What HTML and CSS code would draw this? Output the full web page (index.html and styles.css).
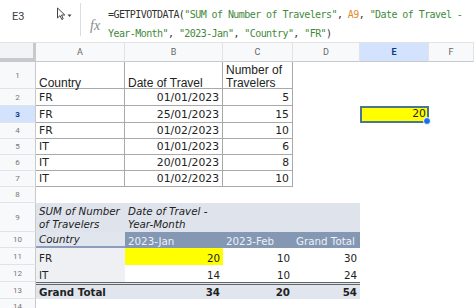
FILE: index.html
```html
<!DOCTYPE html>
<html>
	<head>
		<meta charset="UTF-8">
		<title>GETPIVOTDATA</title>
		<link rel="stylesheet" href="styles.css">
	</head>
	<body>
		<div class="bar">
			<div class="namebox">E3</div>
			<div class="pointer">
				<svg width="18" height="14" viewBox="0 0 18 14">
					<path d="M1.5 1 L1.5 11 L4 8.6 L5.8 12.5 L7.2 11.8 L5.5 8 L8.8 8 Z" fill="#fff" stroke="#444" stroke-width="1" stroke-linejoin="round"/>
					<path d="M11.5 7.5 L15.5 7.5 L13.5 10 Z" fill="#444"/>
				</svg>
			</div>
			<div class="sep"></div>
			<div class="fx">fx</div>
			<div class="formula">
				<div>=GETPIVOTDATA(<span class="str">"SUM of Number of Travelers"</span>, <span class="ref">A9</span>, <span class="str">"Date of Travel -</span></div>
				<div><span class="str">Year-Month"</span>, <span class="str">"2023-Jan"</span>, <span class="str">"Country"</span>, <span class="str">"FR"</span>)</div>
			</div>
		</div>

		<div class="sheet">
			<!-- column headers -->
			<div class="corner"></div>
			<div class="colhead">A</div>
			<div class="colhead">B</div>
			<div class="colhead">C</div>
			<div class="colhead">D</div>
			<div class="colhead on">E</div>
			<div class="colhead">F</div>

			<!-- 1 -->
			<div class="rowhead">1</div>
			<div class="cell box head"><span>Country</span></div>
			<div class="cell box head"><span>Date of Travel</span></div>
			<div class="cell box head"><span>Number of<br>Travelers</span></div>
			<div class="cell"></div><div class="cell"></div><div class="cell"></div>

			<!-- 2 -->
			<div class="rowhead">2</div>
			<div class="cell box">FR</div>
			<div class="cell box num">01/01/2023</div>
			<div class="cell box num">5</div>
			<div class="cell"></div><div class="cell"></div><div class="cell"></div>

			<!-- 3 -->
			<div class="rowhead on">3</div>
			<div class="cell box">FR</div>
			<div class="cell box num">25/01/2023</div>
			<div class="cell box num">15</div>
			<div class="cell"></div>
			<div class="cell num active">20<span class="handle"></span></div>
			<div class="cell"></div>

			<!-- 4 -->
			<div class="rowhead">4</div>
			<div class="cell box">FR</div>
			<div class="cell box num">01/02/2023</div>
			<div class="cell box num">10</div>
			<div class="cell"></div><div class="cell"></div><div class="cell"></div>

			<!-- 5 -->
			<div class="rowhead">5</div>
			<div class="cell box">IT</div>
			<div class="cell box num">01/01/2023</div>
			<div class="cell box num">6</div>
			<div class="cell"></div><div class="cell"></div><div class="cell"></div>

			<!-- 6 -->
			<div class="rowhead">6</div>
			<div class="cell box">IT</div>
			<div class="cell box num">20/01/2023</div>
			<div class="cell box num">8</div>
			<div class="cell"></div><div class="cell"></div><div class="cell"></div>

			<!-- 7 -->
			<div class="rowhead">7</div>
			<div class="cell box">IT</div>
			<div class="cell box num">01/02/2023</div>
			<div class="cell box num">10</div>
			<div class="cell"></div><div class="cell"></div><div class="cell"></div>

			<!-- 8 -->
			<div class="rowhead">8</div>
			<div class="cell"></div><div class="cell"></div><div class="cell"></div>
			<div class="cell"></div><div class="cell"></div><div class="cell"></div>

			<!-- 9 pivot -->
			<div class="rowhead">9</div>
			<div class="cell pv pv-top">SUM of Number<br>of Travelers</div>
			<div class="cell pv pv-top">Date of Travel -<br>Year-Month</div>
			<div class="cell pv pv-top"></div>
			<div class="cell pv pv-top"></div>
			<div class="cell"></div><div class="cell"></div>

			<!-- 10 -->
			<div class="rowhead">10</div>
			<div class="cell pv pv-label">Country</div>
			<div class="cell pv pv-col">2023-Jan</div>
			<div class="cell pv pv-col">2023-Feb</div>
			<div class="cell pv pv-col">Grand Total</div>
			<div class="cell"></div><div class="cell"></div>

			<!-- 11 -->
			<div class="rowhead">11</div>
			<div class="cell pv pv-row">FR</div>
			<div class="cell pv num hl">20</div>
			<div class="cell pv num">10</div>
			<div class="cell pv num">30</div>
			<div class="cell"></div><div class="cell"></div>

			<!-- 12 -->
			<div class="rowhead">12</div>
			<div class="cell pv pv-row">IT</div>
			<div class="cell pv num">14</div>
			<div class="cell pv num">10</div>
			<div class="cell pv num">24</div>
			<div class="cell"></div><div class="cell"></div>

			<!-- 13 -->
			<div class="rowhead">13</div>
			<div class="cell pv total">Grand Total</div>
			<div class="cell pv total num">34</div>
			<div class="cell pv total num">20</div>
			<div class="cell pv total num">54</div>
			<div class="cell"></div><div class="cell"></div>

			<!-- 14 -->
			<div class="rowhead">14</div>
			<div class="cell"></div><div class="cell"></div><div class="cell"></div>
			<div class="cell"></div><div class="cell"></div><div class="cell"></div>
		</div>
	</body>
</html>
```

FILE: styles.css
```css
* {
	margin: 0;
	padding: 0;
	box-sizing: border-box;
}

body {
	width: 474px;
	height: 308px;
	overflow: hidden;
	background: #fff;
	font-family: "DejaVu Sans", Verdana, sans-serif;
	color: #222;
}

/* formula bar */
.bar {
	display: flex;
	height: 43px;
	border-bottom: 1px solid #e3e3e3;
}

.namebox {
	width: 52px;
	padding: 10px 0 0 12px;
	font-family: Roboto, "Liberation Sans", sans-serif;
	font-size: 11px;
	color: #3c4043;
}

.pointer {
	width: 28px;
	padding: 6px 0 0 4px;
}

.sep {
	width: 1px;
	margin: 3px 0 6px;
	background: #dadce0;
}

.fx {
	width: 27px;
	padding: 18px 0 0 9px;
	font-family: "Liberation Serif", serif;
	font-style: italic;
	font-size: 14px;
	color: #888;
}

.formula {
	padding-top: 5px;
	font-family: "DejaVu Sans Mono", "Liberation Mono", monospace;
	font-size: 10px;
	letter-spacing: -0.57px;
	line-height: 19px;
	color: #333;
	white-space: nowrap;
}

.formula .str {
	color: #3f8a3a;
}

.formula .ref {
	color: #e0892f;
}

/* grid */
.sheet {
	display: grid;
	grid-template-columns: 36px 89px 98px 70px 67px 69px 45px;
	grid-template-rows: 19px 27px 17px 17px 16px 16px 16px 16px 16px 29px 16px 17px 17px 17px 16px;
}

.corner {
	background: #f1f3f4;
	border-right: 3px solid #c7c9cc;
	border-bottom: 4px solid #c7c9cc;
}

.colhead {
	display: flex;
	align-items: center;
	justify-content: center;
	background: #f8f9fa;
	border-right: 1px solid #e1e3e6;
	border-bottom: 1px solid #c7c9cc;
	font-family: Roboto, "Liberation Sans", sans-serif;
	font-size: 9px;
	color: #666;
}

.colhead.on {
	background: #d3e3fd;
	color: #0b3a82;
	font-weight: bold;
}

.rowhead {
	display: flex;
	align-items: center;
	justify-content: center;
	background: #f8f9fa;
	border-right: 1px solid #c7c9cc;
	border-bottom: 1px solid #e1e3e6;
	font-family: Roboto, "Liberation Sans", sans-serif;
	font-size: 8px;
	color: #777;
}

.rowhead.on {
	background: #d3e3fd;
	color: #0b3a82;
	font-weight: bold;
}

.cell {
	position: relative;
	display: flex;
	align-items: flex-end;
	padding: 0 3px;
	font-size: 10.8px;
	line-height: 14px;
	white-space: nowrap;
}

.cell.box {
	border-right: 1px solid #a9a9a9;
	border-bottom: 1px solid #a9a9a9;
}

.cell.head {
	font-family: "Liberation Sans", Arial, sans-serif;
	font-size: 12px;
	line-height: 13px;
}

.cell.head span {
	margin-bottom: -2px;
}

.num {
	justify-content: flex-end;
}

.active {
	background: #ffff00;
	border: 2px solid #4b7690;
	padding: 0 1px 0 0;
}

.handle {
	position: absolute;
	right: -4px;
	bottom: -4px;
	width: 6px;
	height: 6px;
	border-radius: 50%;
	background: #1a6ee8;
	border: 1px solid #fff;
	box-sizing: content-box;
}

/* pivot table */
.pv {
	font-size: 10.3px;
	background: #fff;
}

.pv-top {
	background: #dfe4ec;
	font-style: italic;
	line-height: 12.5px;
	padding-bottom: 2px;
}

.pv-label {
	background: #e1e6ee;
	font-style: italic;
	border-bottom: 2px solid #8c9ebb;
}

.pv-col {
	background: #8497b3;
	color: #eef2f8;
}

.pv-row {
	background: #eef0f4;
}

.hl {
	background: #ffff00;
}

.total {
	background: #e1e6ee;
	font-weight: bold;
	border-top: 3px double #666;
}
```
